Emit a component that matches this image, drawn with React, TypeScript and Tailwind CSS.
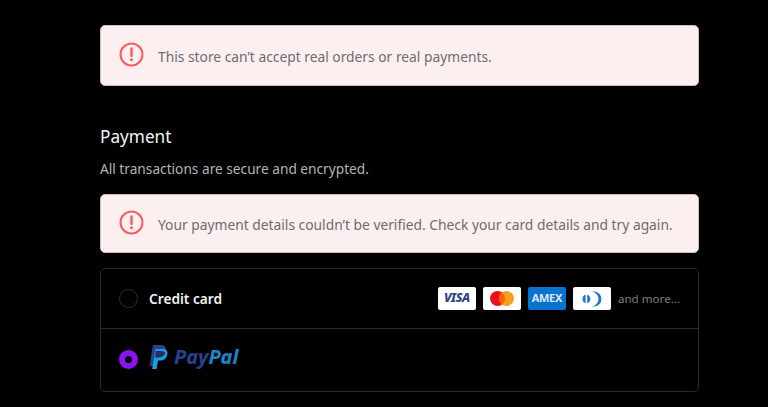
import React from 'react';

function AlertIcon() {
  return (
    <svg width="25" height="25" viewBox="0 0 25 25" fill="none" className="shrink-0 mb-[2px]">
      <circle cx="12.5" cy="12.5" r="11" stroke="#f9595f" strokeWidth="2" />
      <path d="M12.500 6.500v7.400" stroke="#f9595f" strokeWidth="2.400" strokeLinecap="round" />
      <circle cx="12.500" cy="17.800" r="1.500" fill="#f9595f" />
    </svg>
  );
}

function Banner({ text, h }: { text: string; h: string }) {
  return (
    <div className={`flex items-center gap-[14px] pl-[18px] bg-[#fbf0ef] rounded-[5px] border border-[#cdbcba] ${h}`}>
      <AlertIcon />
      <p className="mt-[3px] text-[13.8px] text-[#6f6c6e]">{text}</p>
    </div>
  );
}

function Card({ bg = 'bg-white', children }: { bg?: string; children: React.ReactNode }) {
  return (
    <div className={`w-[38px] h-[23px] rounded-[2px] flex items-center justify-center overflow-hidden ${bg}`}>
      {children}
    </div>
  );
}

export default function App() {
  return (
    <div className="w-[768px] h-[407px] overflow-hidden bg-black font-['Noto_Sans','Open_Sans',sans-serif]">
      <div className="w-[599px] ml-[100px] pt-[25px]">
        <Banner text="This store can’t accept real orders or real payments." h="h-[61px]" />

        <h2 className="mt-[38px] text-[17.2px] leading-[26px] text-[#f4f4f4]">Payment</h2>
        <p className="mt-[9px] text-[13.7px] leading-[20px] text-[#b4b4b4]">All transactions are secure and encrypted.</p>

        <div className="mt-[15px]">
          <Banner text="Your payment details couldn’t be verified. Check your card details and try again." h="h-[59px]" />
        </div>

        <div className="mt-[15px] rounded-[5px] border border-[#2a2a2a]">
          <div className="h-[60px] flex items-center pl-[18px] pr-[18px] border-b border-[#2a2a2a]">
            <span className="w-[19px] h-[19px] rounded-full border border-[#2e2e2e]" />
            <span className="ml-[11px] mt-[1px] text-[13.7px] font-semibold text-[#f0f0f0]">Credit card</span>
            <div className="ml-auto flex items-center gap-[7px]">
              <Card>
                <span className="text-[12.5px] font-extrabold italic tracking-[-0.4px] text-[#2c3d85]">VISA</span>
              </Card>
              <Card>
                <svg width="24" height="15" viewBox="0 0 24 15">
                  <circle cx="7.500" cy="7.500" r="7.500" fill="#e8121f" />
                  <circle cx="16.500" cy="7.500" r="7.500" fill="#f79e1b" />
                  <path d="M12 1.500a7.500 7.500 0 0 1 0 12a7.500 7.500 0 0 1 0-12z" fill="#ff5f00" />
                </svg>
              </Card>
              <Card bg="bg-[#0a72cf]">
                <span className="text-[11px] font-bold tracking-[-0.3px] text-[#d8e8f6]">AMEX</span>
              </Card>
              <Card>
                <svg width="20" height="16" viewBox="0 0 20 16">
                  <path d="M9 .5h3a7.500 7.500 0 0 1 0 15H9a7.500 7.500 0 0 0 0-15z" fill="#1f78c1" />
                  <path d="M3.600 3.800v8.400a4.400 4.400 0 0 1 0-8.400z" fill="#1f78c1" />
                  <path d="M5.200 3.800v8.400a4.400 4.400 0 0 0 0-8.400z" fill="#1f78c1" />
                </svg>
              </Card>
              <span className="text-[11.6px] text-[#7d7d7d]">and more...</span>
            </div>
          </div>
          <div className="h-[62px] flex items-center pl-[18px]">
            <span className="w-[19px] h-[19px] mb-[2px] rounded-full border-[6px] border-[#8a14f0] bg-black" />
            <div className="ml-[11px] flex items-center mb-[7px]">
              <svg width="19" height="24" viewBox="0 0 19 24">
                <path d="M4 0h7.500c4 0 6 2.200 5.400 5.600C16 10.600 13 12.500 9 12.500H6.500L5 21H.5z" fill="#2a4190" />
                <path d="M6.500 4h7c3.600 0 5.500 2 4.900 5.200c-.8 4.400-3.600 6.300-7.300 6.300H9L7.600 24H3.200z" fill="#1a9fdc" />
                <path d="M6 12.500H9c3.400 0 6.200-1.400 7.500-4.600c-.6-.9-1.800-1.500-3.600-1.900H6.900z" fill="#222d65" />
              </svg>
              <span className="ml-[6px] text-[20px] leading-[24px] font-bold italic">
                <span className="text-[#2a4190]">Pay</span>
                <span className="text-[#1a86cc]">Pal</span>
              </span>
            </div>
          </div>
        </div>
      </div>
    </div>
  );
}
